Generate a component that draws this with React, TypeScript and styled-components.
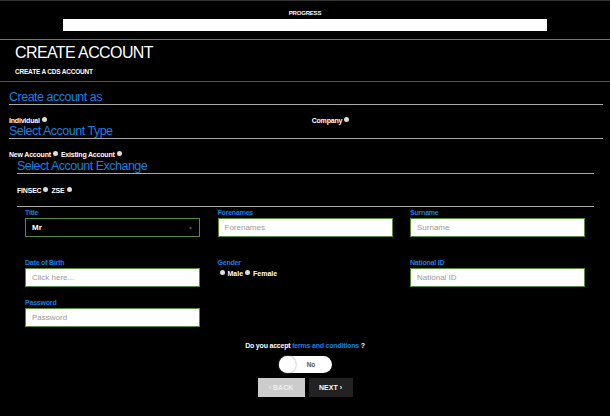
import React from "react";
import styled, { createGlobalStyle } from "styled-components";

const G = createGlobalStyle`
  html,body{margin:0;background:#000;font-family:"Liberation Sans",Arial,sans-serif;color:#fff;}
`;
const Page = styled.div`width:610px;height:416px;border-top:1px solid #333;box-sizing:border-box;overflow:hidden;`;
const Progress = styled.div`display:flex;flex-direction:column;align-items:center;padding-top:9px;height:29px;border-bottom:1px solid #777;`;
const PLabel = styled.div`font-size:6px;font-weight:bold;letter-spacing:-0.2px;height:9px;`;
const Bar = styled.div`width:484px;height:12px;background:#fff;`;
const Header = styled.div`padding:3px 15px 0;height:38px;border-bottom:1px solid #1f6b6b;`;
const H1 = styled.div`font-size:16px;letter-spacing:-0.6px;line-height:20px;`;
const Sub = styled.div`font-size:6.5px;font-weight:bold;margin-top:5px;letter-spacing:-0.2px;`;
const Section = styled.div<{ $l: number; $r: number }>`margin:0 ${p => p.$r}px 0 ${p => p.$l}px;`;
const SecTitle = styled.div<{ $mt: number }>`color:#1a7fe0;font-size:12.5px;letter-spacing:-0.5px;line-height:13px;margin-top:${p => p.$mt}px;border-bottom:1px solid #aaa;`;
const Opts = styled.div<{ $mt: number }>`display:flex;align-items:center;font-size:7px;font-weight:bold;letter-spacing:-0.2px;margin-top:${p => p.$mt}px;height:8px;`;
const Dot = styled.span`display:inline-block;width:5px;height:5px;border-radius:50%;background:#ddd;margin:0 3px 2px 2px;`;
const Spacer = styled.span<{ $w: number }>`display:inline-block;width:${p => p.$w}px;`;
const Form = styled.div`margin:12px 16px 0 17px;border-top:1px solid #aaa;padding:2px 8px 0;display:grid;grid-template-columns:175px 175px 175px;column-gap:17.5px;`;
const Field = styled.div<{ $h: number }>`height:${p => p.$h}px;`;
const Label = styled.div`color:#1a7fe0;font-size:7px;font-weight:bold;letter-spacing:-0.2px;height:9px;`;
const Input = styled.div<{ $dark?: boolean }>`height:19px;box-sizing:border-box;border:1px solid #5a8a3a;background:${p => p.$dark ? "#000" : "#fff"};color:${p => p.$dark ? "#fff" : "#999"};font-size:8px;display:flex;align-items:center;justify-content:space-between;padding:0 6px;font-weight:${p => p.$dark ? "bold" : "normal"};`;
const Caret = styled.span`color:#555;font-size:5px;`;
const Gender = styled.div`display:flex;align-items:center;font-size:7px;font-weight:bold;margin-top:2px;`;
const Bottom = styled.div`display:flex;flex-direction:column;align-items:center;margin-top:16px;`;
const Terms = styled.div`font-size:7px;font-weight:bold;letter-spacing:-0.2px;`;
const Link = styled.span`color:#1a7fe0;`;
const Toggle = styled.div`margin-top:7px;width:53px;height:17px;border-radius:9px;background:#fff;position:relative;display:flex;align-items:center;justify-content:center;color:#555;font-size:6.5px;font-weight:bold;padding-left:12px;box-sizing:border-box;`;
const Knob = styled.div`position:absolute;left:0;top:0;width:17px;height:17px;border-radius:50%;background:#fff;box-shadow:0 0 2px #888;`;
const Btns = styled.div`display:flex;gap:4px;margin-top:5px;`;
const Btn = styled.div<{ $back?: boolean }>`height:19px;width:${p => p.$back ? 47 : 44}px;display:flex;align-items:center;justify-content:center;font-size:7px;font-weight:bold;background:${p => p.$back ? "#ccc" : "#222"};color:${p => p.$back ? "#eee" : "#fff"};`;

export default function App() {
  return (
    <Page>
      <G />
      <Progress><PLabel>PROGRESS</PLabel><Bar /></Progress>
      <Header><H1>CREATE ACCOUNT</H1><Sub>CREATE A CDS ACCOUNT</Sub></Header>
      <Section $l={9} $r={7}>
        <SecTitle $mt={9}>Create account as</SecTitle>
        <Opts $mt={11}>Individual<Dot /><Spacer $w={262} />Company<Dot /></Opts>
        <SecTitle $mt={1}>Select Account Type</SecTitle>
        <Opts $mt={11}>New Account<Dot />Existing Account<Dot /></Opts>
      </Section>
      <Section $l={17} $r={16}>
        <SecTitle $mt={2}>Select Account Exchange</SecTitle>
        <Opts $mt={12}>FINSEC<Dot />ZSE<Dot /></Opts>
      </Section>
      <Form>
        <Field $h={50}><Label>Title</Label><Input $dark>Mr<Caret>▼</Caret></Input></Field>
        <Field $h={50}><Label>Forenames</Label><Input>Forenames</Input></Field>
        <Field $h={50}><Label>Surname</Label><Input>Surname</Input></Field>
        <Field $h={40}><Label>Date of Birth</Label><Input>Click here...</Input></Field>
        <Field $h={40}><Label>Gender</Label><Gender><Dot />Male<Dot />Female</Gender></Field>
        <Field $h={40}><Label>National ID</Label><Input>National ID</Input></Field>
        <Field $h={27}><Label>Password</Label><Input>Password</Input></Field>
      </Form>
      <Bottom>
        <Terms>Do you accept <Link>terms and conditions</Link> ?</Terms>
        <Toggle><Knob />No</Toggle>
        <Btns><Btn $back>‹ BACK</Btn><Btn>NEXT ›</Btn></Btns>
      </Bottom>
    </Page>
  );
}
